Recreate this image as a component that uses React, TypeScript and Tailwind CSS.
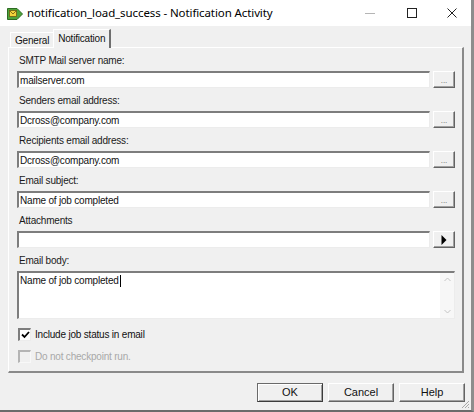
import React from "react";

// Classic 3D edges
const sunken =
  "bg-white border-t-2 border-l-2 border-t-[#7d7d7d] border-l-[#7d7d7d] border-b border-r border-b-[#ececec] border-r-[#ececec]";
const raised =
  "bg-[#f0f0f0] border-t border-l border-t-white border-l-white border-b border-r border-b-[#646464] border-r-[#646464] shadow-[inset_-1px_-1px_0_#a0a0a0]";

function AppIcon() {
  return (
    <svg width="16" height="12" viewBox="0 0 16 12">
      <path d="M0.5 0.5 H10 L15.5 6 L10 11.5 H0.5 Z" fill="#4ea33a" stroke="#2d6b22" />
      <rect x="2.5" y="2.5" width="7" height="6" fill="#f3d23a" stroke="#6b5a12" strokeWidth="0.8" />
      <path d="M2.5 2.5 L6 6 L9.5 2.5" fill="none" stroke="#6b5a12" strokeWidth="0.8" />
    </svg>
  );
}

function TitleBar() {
  return (
    <div className="h-[26px] bg-white flex items-center shrink-0">
      <div className="ml-[7px] mt-[1px]">
        <AppIcon />
      </div>
      <span className="ml-[4px] font-['Noto_Sans',sans-serif] text-[11.5px] tracking-[-0.1px] text-black leading-none">
        notification_load_success - Notification Activity
      </span>
      <div className="ml-auto flex items-center h-full">
        <div className="w-[42px] h-full flex items-center justify-center">
          <svg width="10" height="10" viewBox="0 0 10 10">
            <path d="M0 5.5 H10" stroke="#b5b5b5" strokeWidth="1" />
          </svg>
        </div>
        <div className="w-[42px] h-full flex items-center justify-center">
          <svg width="10" height="10" viewBox="0 0 10 10">
            <rect x="0.5" y="0.5" width="9" height="9" fill="none" stroke="#222" strokeWidth="1" />
          </svg>
        </div>
        <div className="w-[38px] h-full flex items-center justify-center">
          <svg width="10" height="10" viewBox="0 0 10 10">
            <path d="M0.5 0.5 L9.5 9.5 M9.5 0.5 L0.5 9.5" stroke="#222" strokeWidth="1" />
          </svg>
        </div>
      </div>
    </div>
  );
}

function DotsButton() {
  return (
    <div className={`${raised} w-[22px] h-[17px] flex items-end justify-center pb-[2px]`}>
      <span className="text-[8px] leading-none text-[#666] tracking-[0px]">...</span>
    </div>
  );
}

function ArrowButton() {
  return (
    <div className={`${raised} w-[22px] h-[17px] flex items-center justify-center`}>
      <svg width="6" height="10" viewBox="0 0 6 10">
        <path d="M0.5 0 L5.5 5 L0.5 10 Z" fill="#000" />
      </svg>
    </div>
  );
}

function Field({
  label,
  value,
  button,
}: {
  label: string;
  value: string;
  button: "dots" | "arrow";
}) {
  return (
    <div className="flex flex-col mb-[6px]">
      <div className="h-[14px] leading-[14px] pl-[2px] text-[#1a1a1a]">{label}</div>
      <div className="mt-[3px] flex gap-[3px]">
        <div className={`${sunken} w-[413px] h-[17px] flex items-center pl-[1px] text-[#111]`}>
          {value}
        </div>
        {button === "dots" ? <DotsButton /> : <ArrowButton />}
      </div>
    </div>
  );
}

function Checkbox({ checked, disabled, label }: { checked?: boolean; disabled?: boolean; label: string }) {
  return (
    <div className="flex items-center h-[13px] pl-[1px]">
      <div
        className={`w-[13px] h-[13px] flex items-center justify-center border-t-2 border-l-2 border-b border-r ${
          disabled
            ? "bg-[#f0f0f0] border-t-[#b4b4b4] border-l-[#b4b4b4] border-b-[#f8f8f8] border-r-[#f8f8f8]"
            : "bg-white border-t-[#7d7d7d] border-l-[#7d7d7d] border-b-[#ececec] border-r-[#ececec]"
        }`}
      >
        {checked && (
          <svg width="9" height="8" viewBox="0 0 9 8">
            <path d="M1 3.5 L3.5 6 L8 1" fill="none" stroke="#000" strokeWidth="1.8" />
          </svg>
        )}
      </div>
      <span className={`ml-[4px] ${disabled ? "text-[#a8a8a8]" : "text-[#111]"}`}>{label}</span>
    </div>
  );
}

function PushButton({ label, isDefault }: { label: string; isDefault?: boolean }) {
  return (
    <div
      className={`w-[66px] h-[19px] flex items-center justify-center text-[11px] tracking-[0px] text-[#111] ${
        isDefault
          ? "bg-[#f0f0f0] border border-t-[#6a6a6a] border-l-[#6a6a6a] border-b-[#3c3c3c] border-r-[#3c3c3c] shadow-[inset_1px_1px_0_#fff,inset_-1px_-1px_0_#a0a0a0]"
          : raised
      }`}
    >
      {label}
    </div>
  );
}

export default function App() {
  return (
    <div className="w-[474px] h-[412px] bg-[#f0f0f0] flex flex-col border-r-[3px] border-r-[#8d8d8d] border-b-[2px] border-b-[#6b6b6b] font-['Liberation_Sans',Arial,sans-serif] text-[10px] tracking-[-0.2px] relative overflow-hidden">
      <TitleBar />

      {/* Tabs */}
      <div className="h-[21px] flex items-end pl-[10px] shrink-0">
        <div className="h-[15px] px-[4px] flex items-center border-t border-l border-t-white border-l-white text-[#111]">
          General
        </div>
        <div className="relative z-10 -mb-px h-[19px] px-[4px] pb-[2px] flex items-center bg-[#f0f0f0] border-t border-l border-t-white border-l-white border-r-2 border-r-[#6e6e6e] text-[#111]">
          Notification
        </div>
      </div>

      {/* Tab panel */}
      <div className="ml-[8px] w-[456px] h-[326px] shrink-0 border-t border-l border-t-white border-l-white border-r-2 border-b-2 border-r-[#8a8a8a] border-b-[#8a8a8a] pl-[8px] pt-[6px]">
        <Field label="SMTP Mail server name:" value="mailserver.com" button="dots" />
        <Field label="Senders email address:" value="Dcross@company.com" button="dots" />
        <Field label="Recipients email address:" value="Dcross@company.com" button="dots" />
        <Field label="Email subject:" value="Name of job completed" button="dots" />
        <Field label="Attachments" value="" button="arrow" />
        <div className="flex flex-col">
          <div className="h-[14px] leading-[14px] pl-[2px] text-[#1a1a1a]">Email body:</div>
          <div className={`${sunken} mt-[3px] w-[438px] h-[48px] flex text-[#111]`}>
            <div className="flex-1 pl-[1px] pt-[2px] leading-[12px] flex items-start">
              <span>Name of job completed</span>
              <span className="inline-block w-px h-[12px] bg-black ml-[1px]" />
            </div>
            <div className="w-[14px] flex flex-col items-center justify-between py-[4px] bg-[#f7f7f7]">
              <svg width="7" height="5" viewBox="0 0 7 5">
                <path d="M0.5 4 L3.5 1 L6.5 4" fill="none" stroke="#c4c4c4" strokeWidth="1" />
              </svg>
              <svg width="7" height="5" viewBox="0 0 7 5">
                <path d="M0.5 1 L3.5 4 L6.5 1" fill="none" stroke="#c4c4c4" strokeWidth="1" />
              </svg>
            </div>
          </div>
        </div>
        <div className="mt-[9px]">
          <Checkbox checked label="Include job status in email" />
        </div>
        <div className="mt-[9px]">
          <Checkbox disabled label="Do not checkpoint run." />
        </div>
      </div>

      {/* Dialog buttons */}
      <div className="mt-[10px] flex justify-end gap-[5px] pr-[6px]">
        <PushButton label="OK" isDefault />
        <PushButton label="Cancel" />
        <PushButton label="Help" />
      </div>

      {/* Resize grip */}
      <svg className="absolute right-[1px] bottom-[1px]" width="10" height="10" viewBox="0 0 10 10">
        <path d="M9 2 L2 9 M9 5 L5 9 M9 8 L8 9" stroke="#a8a8a8" strokeWidth="1" />
      </svg>
    </div>
  );
}
